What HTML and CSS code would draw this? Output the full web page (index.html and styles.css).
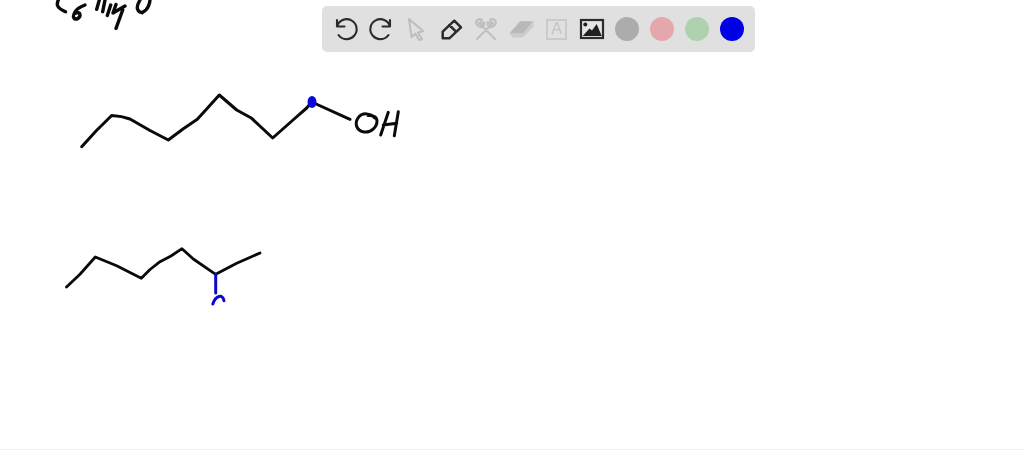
FILE: index.html
```html
<!DOCTYPE html>
<html lang="en">
<head>
<meta charset="utf-8">
<title>Whiteboard</title>
<link rel="stylesheet" href="styles.css">
</head>
<body>
<main class="board">
  <svg class="ink" viewBox="0 0 1024 449" role="img" aria-label="Handwritten skeletal formulas">
    <g class="stroke">
      <path class="thick" d="M58.3 0Q56.5 4 58 6.5T65.5 11.7"/>
      <path class="thick" d="M85 5Q77 8 75 12T73.5 17Q74.5 19.5 77 19Q80.5 17 80 14.5T76.5 13"/>
      <path class="thick" d="M99.3 0L96.7 9.3M105 0L102.7 11.7M110.7 5L107.3 15.5M116 4.5L113 13L125 6M122.7 10L116 28.3"/>
      <path class="thick" d="M140 0Q136.5 6 137.5 9T142 12.7Q147 10 148.5 6T150 0"/>
      <path d="M81.7 146.7L96 131L111.7 115.5Q122 116 130 119L150 130.5L168.3 140L183 129L197.3 119.3L208 107.5L219.3 95L236.7 110L251.7 118.3L272.7 138L293 120L306.7 108L311.7 102L350 119.3"/>
      <path d="M374.5 118C371 113 362 112 358 118C354 124 357 131 364 132C371 133 377 127 377 121C377 117 373 115 368 115.5"/>
      <path d="M388.3 112.3L380.7 135M398.3 111.7L394.3 135.7M383.3 125L396.7 123.3"/>
      <path class="chain" d="M66.5 287L80 274.3L95.3 257L116.7 265.7L141.3 278.3L150 269.5L160 261.7L171 256L182 248.7L193.3 259L215.7 274.3L236.7 263.3L260 253"/>
      <path class="blue" d="M215.7 274.3V293M212.8 304Q215 297.5 219 296.5T224 300.7"/>
    </g>
    <ellipse class="dot" cx="312" cy="102" rx="4.5" ry="6"/>
  </svg>

  <nav class="toolbar" aria-label="Drawing tools">
    <svg class="tool" viewBox="0 0 24 24"><path d="M3 3V9.5H10.5M3 9.5A10 10 0 1 1 4.5 18"/></svg>
    <svg class="tool" viewBox="0 0 24 24"><path d="M21 3V9.5H13.5M21 9.5A10 10 0 1 0 19.5 18"/></svg>
    <svg class="tool faint" viewBox="0 0 24 24"><path d="M5 2L19 14L14 15.5L18 22L15 23L11.5 16.5L7.5 20Z"/></svg>
    <svg class="tool bold" viewBox="0 0 24 24"><path d="M15.3 3.7L22 10.3L10.3 21.3H3.7V14.7ZM10.3 8L17 14.7"/></svg>
    <svg class="tool faint" viewBox="0 0 24 24"><path d="M5 6L21 22M19 6L3 22M2.5 7A3.5 3.5 0 0 1 8 3L6 5.5L7.5 7L10 5A3.5 3.5 0 0 1 5 9.5ZM21.5 7A3.5 3.5 0 0 0 16 3L18 5.5L16.5 7L14 5A3.5 3.5 0 0 0 19 9.5Z"/></svg>
    <svg class="tool eraser" viewBox="0 0 24 24"><path class="band" d="M0.5 16.3H14L24.5 5V9.5L13.7 20.5H3.5Z"/><path class="top" d="M11 4.2H24.5L14 16.3H0.5Z"/></svg>
    <span class="letter">A</span>
    <svg class="tool" viewBox="0 0 24 24"><rect class="frame" x="1" y="3" width="22" height="18"/><circle class="solid" cx="5.3" cy="7.5" r="2"/><path class="solid" d="M2.7 19L9.5 11.5L12 13.5L16.7 7L21.7 19Z"/></svg>
    <span class="swatch grey"></span>
    <span class="swatch pink"></span>
    <span class="swatch green"></span>
    <span class="swatch navy"></span>
  </nav>
</main>
</body>
</html>
```

FILE: styles.css
```css
* {
  box-sizing: border-box;
}

html,
body {
  margin: 0;
  height: 100%;
  background: #fff;
  overflow: hidden;
}

.board {
  position: relative;
  width: 1024px;
  height: 450px;
  border-bottom: 1px solid #efefef;
  font-family: "Liberation Sans", Arial, sans-serif;
}

.ink {
  position: absolute;
  inset: 0;
  width: 1024px;
  height: 449px;
}

.stroke path {
  fill: none;
  stroke: #0a0a0a;
  stroke-width: 3;
  stroke-linecap: round;
  stroke-linejoin: round;
}

.stroke .thick {
  stroke-width: 3.4;
}

.stroke .chain {
  stroke-width: 2.8;
}

.stroke .blue {
  stroke: #0a0ac8;
  stroke-width: 3;
}

.dot {
  fill: #0808d8;
}

.toolbar {
  position: absolute;
  top: 6px;
  left: 322px;
  width: 433px;
  height: 46px;
  display: flex;
  align-items: center;
  gap: 11.1px;
  padding: 0 11px 0 12px;
  background: #e0e0e0;
  border-radius: 5px;
}

.tool {
  flex: none;
  width: 24px;
  height: 24px;
  fill: none;
  stroke: #2b2b2b;
  stroke-width: 2.1;
  stroke-linecap: round;
  stroke-linejoin: round;
  overflow: visible;
}

.tool.bold {
  stroke-width: 2.5;
}

.tool.faint {
  stroke: #bebebe;
  stroke-width: 2;
}

.tool.eraser {
  stroke: none;
}

.tool .top {
  fill: #b8b8b8;
}

.tool .band {
  fill: #cbcbcb;
}

.tool .frame {
  fill: #e4e4e4;
  stroke-linecap: butt;
  stroke-linejoin: miter;
  stroke-width: 2.2;
}

.tool .solid {
  fill: #1f1f1f;
  stroke: none;
}

.letter {
  flex: none;
  width: 21px;
  height: 21px;
  margin: 0 1.5px;
  display: flex;
  align-items: center;
  justify-content: center;
  border: 2px solid #cacaca;
  color: #c4c4c4;
  font-size: 16px;
  line-height: 1;
}

.swatch {
  flex: none;
  width: 24px;
  height: 24px;
  border-radius: 50%;
}

.grey {
  background: #acacac;
}

.pink {
  background: #e4a8ac;
}

.green {
  background: #aed2ae;
}

.navy {
  background: #0000e6;
}
```
